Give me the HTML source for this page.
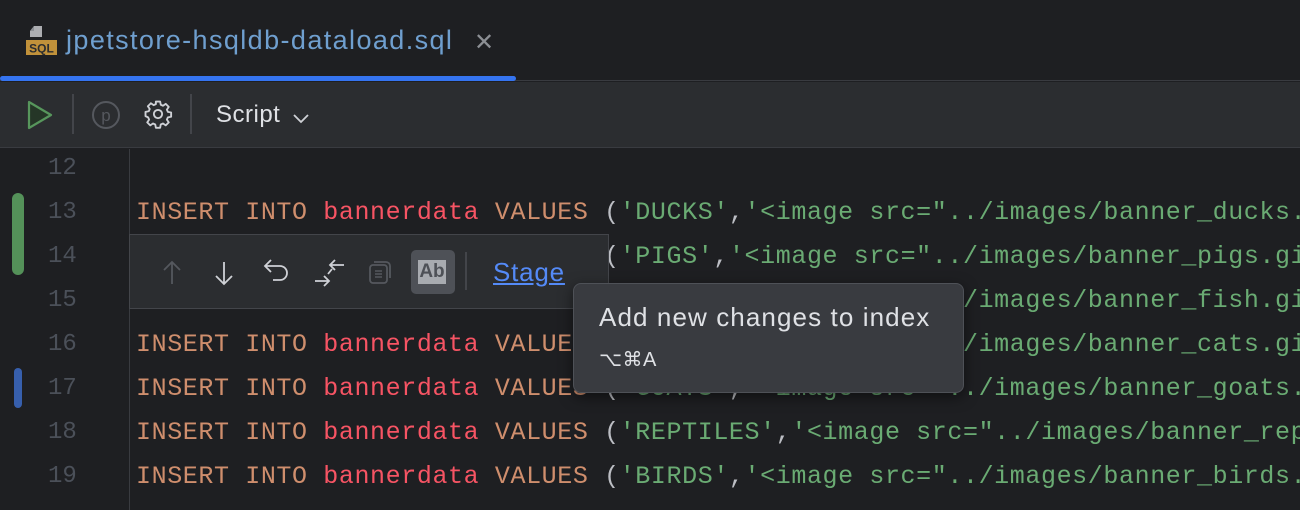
<!DOCTYPE html>
<html><head><meta charset="utf-8"><style>
*{margin:0;padding:0;box-sizing:border-box}
body{width:1300px;height:510px;background:#1e1f22;overflow:hidden;position:relative;font-family:"Liberation Sans",sans-serif}
.tabbar{position:absolute;left:0;top:0;width:1300px;height:81px;background:#1e1f22;border-bottom:1px solid #393b40}
.tabline{position:absolute;left:0;top:76px;width:516px;height:5px;background:#3574f0;border-radius:3px}
.tabtitle{position:absolute;left:66px;top:25px;font-size:27px;color:#6f9fcf;letter-spacing:1.4px}
.close{position:absolute;left:474px;top:28px;font-size:24px;color:#8c8f94}
.toolbar{position:absolute;left:0;top:82px;width:1300px;height:66px;background:#2b2d30;border-bottom:1px solid #393b40}
.sep{position:absolute;width:2px;background:#43454a}
.gutterline{position:absolute;left:129px;top:149px;width:1px;height:361px;background:#393b40}
.ln{position:absolute;left:48px;font-family:"Liberation Mono",monospace;font-size:24px;color:#4b5059}
.clip{position:absolute;left:130px;top:149px;width:1170px;height:361px;overflow:hidden}
.line{position:absolute;left:6px;font-family:"Liberation Mono",monospace;font-size:25px;letter-spacing:0.6px;white-space:pre;color:#bcbec4}
.k{color:#cf8e6d}.t{color:#f75464}.s{color:#6aab73}
.popup{position:absolute;left:129px;top:234px;width:480px;height:75px;background:#2b2d30;border:1px solid #43454a}
.tip{position:absolute;left:573px;top:283px;width:391px;height:110px;background:#393b40;border:1px solid #4e5157;border-radius:8px;box-shadow:0 4px 14px rgba(0,0,0,.5)}
</style></head><body>
<div class="tabbar">
<svg style="position:absolute;left:26px;top:24px" width="31" height="33" viewBox="0 0 31 33">
<path d="M8 2h8v11H4V7z" fill="#cfd1d6" opacity=".8"/><path d="M4 7l4-5v5z" fill="#8c8f94"/>
<rect x="0" y="16" width="31" height="15" fill="#c1913a"/>
<text x="15.5" y="28.5" font-family="Liberation Sans" font-size="12" font-weight="bold" fill="#2b2d30" text-anchor="middle">SQL</text>
</svg>
<div class="tabtitle">jpetstore-hsqldb-dataload.sql</div>
<div class="close">✕</div>
<div class="tabline"></div>
</div>
<div class="toolbar">
<svg style="position:absolute;left:26px;top:18px" width="28" height="30" viewBox="0 0 28 30"><path d="M3 2L25 15L3 28Z" fill="#253627" stroke="#57965c" stroke-width="2.2" stroke-linejoin="round"/></svg>
<div class="sep" style="left:72px;top:12px;height:40px"></div>
<svg style="position:absolute;left:91px;top:18px" width="30" height="30" viewBox="0 0 30 30"><circle cx="15" cy="15" r="13" fill="none" stroke="#55585e" stroke-width="2"/><text x="15" y="21" font-family="Liberation Sans" font-size="17" fill="#55585e" text-anchor="middle">p</text></svg>
<svg style="position:absolute;left:143px;top:17px" width="30" height="30" viewBox="0 0 24 24"><path d="M10.3 2h3.4l.5 2.6 1.8.8 2.2-1.5 2.4 2.4-1.5 2.2.8 1.8 2.6.5v3.4l-2.6.5-.8 1.8 1.5 2.2-2.4 2.4-2.2-1.5-1.8.8-.5 2.6h-3.4l-.5-2.6-1.8-.8-2.2 1.5-2.4-2.4 1.5-2.2-.8-1.8L2 13.7v-3.4l2.6-.5.8-1.8-1.5-2.2 2.4-2.4 2.2 1.5 1.8-.8z" fill="none" stroke="#cfd1d6" stroke-width="1.5" stroke-linejoin="round"/><circle cx="12" cy="12" r="3.3" fill="none" stroke="#cfd1d6" stroke-width="1.5"/></svg>
<div class="sep" style="left:190px;top:12px;height:40px"></div>
<div style="position:absolute;left:216px;top:19px;font-size:24px;letter-spacing:0.5px;color:#dfe1e5">Script</div>
<svg style="position:absolute;left:292px;top:30px" width="18" height="12" viewBox="0 0 18 12"><path d="M2 3l7 7 7-7" fill="none" stroke="#cfd1d6" stroke-width="1.8"/></svg>
</div>
<div class="gutterline"></div>
<div style="position:absolute;left:12px;top:193px;width:12px;height:82px;background:#549159;border-radius:6px"></div>
<div style="position:absolute;left:14px;top:368px;width:8px;height:40px;background:#375fad;border-radius:4px"></div>

<div class="ln" style="top:155px">12</div>
<div class="ln" style="top:199px">13</div>
<div class="ln" style="top:243px">14</div>
<div class="ln" style="top:287px">15</div>
<div class="ln" style="top:331px">16</div>
<div class="ln" style="top:375px">17</div>
<div class="ln" style="top:419px">18</div>
<div class="ln" style="top:463px">19</div>

<div class="clip">
<div class="line" style="top:49px"><span class="k">INSERT INTO </span><span class="t">bannerdata</span><span class="k"> VALUES </span>(<span class="s">'DUCKS'</span>,<span class="s">'&lt;image src="../images/banner_ducks.gif"&gt;'</span>);</div>
<div class="line" style="top:93px"><span class="k">INSERT INTO </span><span class="t">bannerdata</span><span class="k"> VALUES </span>(<span class="s">'PIGS'</span>,<span class="s">'&lt;image src="../images/banner_pigs.gif"&gt;'</span>);</div>
<div class="line" style="top:137px"><span class="k">INSERT INTO </span><span class="t">bannerdata</span><span class="k"> VALUES </span>(<span class="s">'FISH'</span>,<span class="s">'&lt;image src="../images/banner_fish.gif"&gt;'</span>);</div>
<div class="line" style="top:181px"><span class="k">INSERT INTO </span><span class="t">bannerdata</span><span class="k"> VALUES </span>(<span class="s">'CATS'</span>,<span class="s">'&lt;image src="../images/banner_cats.gif"&gt;'</span>);</div>
<div class="line" style="top:225px"><span class="k">INSERT INTO </span><span class="t">bannerdata</span><span class="k"> VALUES </span>(<span class="s">'GOATS'</span>,<span class="s">'&lt;image src="../images/banner_goats.gif"&gt;'</span>);</div>
<div class="line" style="top:269px"><span class="k">INSERT INTO </span><span class="t">bannerdata</span><span class="k"> VALUES </span>(<span class="s">'REPTILES'</span>,<span class="s">'&lt;image src="../images/banner_reptiles.gif"&gt;'</span>);</div>
<div class="line" style="top:313px"><span class="k">INSERT INTO </span><span class="t">bannerdata</span><span class="k"> VALUES </span>(<span class="s">'BIRDS'</span>,<span class="s">'&lt;image src="../images/banner_birds.gif"&gt;'</span>);</div>
</div>

<div class="popup">
<svg style="position:absolute;left:30px;top:24px" width="24" height="28" viewBox="0 0 24 28"><path d="M12 3v22M4 11l8-8 8 8" fill="none" stroke="#55585e" stroke-width="1.8"/></svg>
<svg style="position:absolute;left:82px;top:24px" width="24" height="28" viewBox="0 0 24 28"><path d="M12 3v22M4 17l8 8 8-8" fill="none" stroke="#cfd1d6" stroke-width="1.8"/></svg>
<svg style="position:absolute;left:132px;top:22px" width="30" height="30" viewBox="0 0 30 30"><path d="M9 3L3 9l6 6M3 9h15a7 7 0 0 1 0 14h-7" fill="none" stroke="#cfd1d6" stroke-width="1.8"/></svg>
<svg style="position:absolute;left:182px;top:22px" width="34" height="34" viewBox="0 0 34 34"><path d="M32 8H18M23 3l-5 5 5 5M3 24h14M12 19l5 5-5 5" fill="none" stroke="#cfd1d6" stroke-width="1.8"/><path d="M16 17l4-5" stroke="#cfd1d6" stroke-width="1.8"/></svg>
<svg style="position:absolute;left:238px;top:25px" width="26" height="26" viewBox="0 0 26 26"><rect x="2" y="5" width="17" height="18" rx="3" fill="none" stroke="#55585e" stroke-width="1.8"/><path d="M6 2h12a4 4 0 0 1 4 4v12" fill="none" stroke="#55585e" stroke-width="1.8"/><path d="M7 11h7M7 14h7M7 17h7" stroke="#55585e" stroke-width="1.6"/></svg>
<div style="position:absolute;left:281px;top:15px;width:44px;height:44px;background:#4e5157;border-radius:5px"></div>
<div style="position:absolute;left:288px;top:25px;width:28px;height:24px;background:#a8abb0;color:#4e5157;font-size:19px;font-weight:bold;line-height:24px;text-align:center">Ab</div>
<div class="sep" style="left:335px;top:17px;height:38px"></div>
<div style="position:absolute;left:363px;top:22px;font-size:26px;letter-spacing:0.8px;color:#548af7;text-decoration:underline">Stage</div>
</div>
<div class="tip">
<div style="position:absolute;left:25px;top:18px;font-size:26px;letter-spacing:1.1px;color:#dfe1e5">Add new changes to index</div>
<div style="position:absolute;left:25px;top:63px;font-size:20px;letter-spacing:0.5px;color:#dfe1e5;font-family:'Liberation Sans','DejaVu Sans',sans-serif">⌥⌘A</div>
</div>
</body></html>
